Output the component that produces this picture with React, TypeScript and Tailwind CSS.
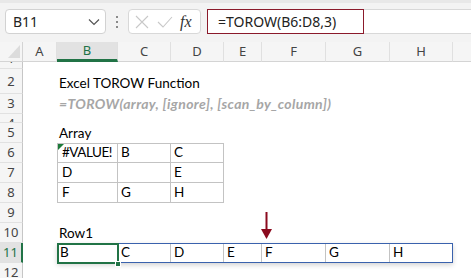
import React from "react";

const COLS: { n: string; w: number }[] = [
  { n: "A", w: 34 },
  { n: "B", w: 61 },
  { n: "C", w: 53 },
  { n: "D", w: 53 },
  { n: "E", w: 38 },
  { n: "F", w: 64 },
  { n: "G", w: 64 },
  { n: "H", w: 63 },
  { n: "", w: 40 },
];

const ROWS: { n: number; h: number }[] = [
  { n: 1, h: 7 },
  { n: 2, h: 25 },
  { n: 3, h: 20 },
  { n: 4, h: 9 },
  { n: 5, h: 20 },
  { n: 6, h: 20 },
  { n: 7, h: 20 },
  { n: 8, h: 20 },
  { n: 9, h: 20 },
  { n: 10, h: 20 },
  { n: 11, h: 20 },
  { n: 12, h: 20 },
];

const cellFont = { fontFamily: "Lato, 'Liberation Sans', sans-serif" };
const uiFont = { fontFamily: "'Noto Sans', 'Open Sans', sans-serif" };

function RowHeader({ n, h }: { n: number; h: number }) {
  const sel = n === 11;
  const align = n === 1 ? "items-end" : n === 4 ? "items-start" : "items-center";
  return (
    <div
      className={
        "relative w-[23px] shrink-0 overflow-hidden border-b border-r border-b-[#e1e1e1] flex justify-center text-[13px] " +
        align +
        " " +
        (sel
          ? "bg-[#e2e2e2] border-r-[#217346] border-r-2 text-[#217346]"
          : "bg-[#f5f5f5] border-r-[#c6c6c6] text-[#444]")
      }
      style={{ height: h, ...uiFont }}
    >
      <span className="block h-[19px] leading-[19px] shrink-0">{n}</span>
    </div>
  );
}

function Text({ children, className = "text-black text-[13.5px]" }: { children: React.ReactNode; className?: string }) {
  return (
    <span className={"whitespace-nowrap leading-[18px] " + className} style={cellFont}>
      {children}
    </span>
  );
}

function Cell({
  w,
  children,
  className = "",
}: {
  w: number;
  children?: React.ReactNode;
  className?: string;
}) {
  return (
    <div
      className={"relative shrink-0 h-full flex items-end pb-[1px] overflow-visible " + className}
      style={{ width: w }}
    >
      {children}
    </div>
  );
}

function Sheet() {
  const table: Record<number, string[]> = {
    6: ["#VALUE!", "B", "C"],
    7: ["D", "", "E"],
    8: ["F", "G", "H"],
  };
  const spill = ["B", "C", "D", "E", "F", "G", "H"];
  return (
    <div className="relative bg-white">
      {/* column headers */}
      <div className="flex h-[20px] bg-[#f5f5f5]">
        <div className="relative w-[23px] shrink-0 border-r border-b border-[#d4d4d4]">
          <svg className="absolute left-[8px] top-[3px]" width="12" height="13" viewBox="0 0 12 13">
            <polygon points="12,0 12,13 0,13" fill="#dcdcdc" />
          </svg>
        </div>
        {COLS.map((c, i) => {
          const sel = c.n === "B";
          return (
            <div
              key={i}
              className={
                "shrink-0 flex items-center justify-center text-[13px] border-r border-[#e0e0e0] " +
                (sel
                  ? "bg-[#e2e2e2] border-b-[3px] border-b-[#217346] text-[#217346]"
                  : "border-b border-b-[#d4d4d4] text-[#444]")
              }
              style={{ width: c.w, ...uiFont }}
            >
              {c.n}
            </div>
          );
        })}
      </div>
      {ROWS.map((r) => (
        <div key={r.n} className="flex" style={{ height: r.h }}>
          <RowHeader n={r.n} h={r.h} />
          <Cell w={COLS[0].w} />
          {r.n === 2 && (
            <Cell w={COLS[1].w} className="pl-[2px] pb-[2px]">
              <Text>Excel TOROW Function</Text>
            </Cell>
          )}
          {r.n === 3 && (
            <Cell w={COLS[1].w} className="pl-[2px]">
              <Text className="italic font-bold text-[14px] tracking-[0.35px] text-[#a6a6a6]">
                =TOROW(array, [ignore], [scan_by_column])
              </Text>
            </Cell>
          )}
          {r.n === 5 && (
            <Cell w={COLS[1].w} className="pl-[2px]">
              <Text>Array</Text>
            </Cell>
          )}
          {r.n === 10 && (
            <Cell w={COLS[1].w} className="pl-[2px]">
              <Text>Row1</Text>
            </Cell>
          )}
          {table[r.n] &&
            table[r.n].map((t, i) => (
              <Cell
                key={i}
                w={COLS[i + 1].w}
                className={
                  "border-b border-r border-[#c3c3c3] " +
                  (i === 0 ? "border-l pl-[4px] " : "pl-[3px] ") +
                  (r.n === 6 ? "border-t" : "")
                }
              >
                {r.n === 6 && i === 0 && (
                  <svg className="absolute left-0 top-0" width="6" height="6" viewBox="0 0 6 6">
                    <polygon points="0,0 6,0 0,6" fill="#1e7a3a" />
                  </svg>
                )}
                {t === "#VALUE!" ? (
                  <Text className="text-black text-[13.5px] tracking-[-0.5px]">{t}</Text>
                ) : (
                  <Text>{t}</Text>
                )}
              </Cell>
            ))}
          {r.n === 11 && (
            <div className="relative flex h-full border border-[#3a62ad] shadow-[0_2px_5px_rgba(0,0,0,0.18)]">
              {spill.map((t, i) => (
                <Cell
                  key={i}
                  w={COLS[i + 1].w - (i === 0 ? 1 : 0) - (i === spill.length - 1 ? 1 : 0)}
                  className={
                    (i === 0 ? "pl-[2px] " : "pl-[3px] ") +
                    "pb-0 " +
                    (i < spill.length - 1 ? "border-r border-[#c3c3c3]" : "")
                  }
                >
                  <Text>{t}</Text>
                </Cell>
              ))}
              <div className="absolute left-[-1px] top-[-1px] w-[62px] h-[21px] border-2 border-[#217346] pointer-events-none" />
              <div className="absolute left-[57px] top-[17px] w-[6px] h-[6px] bg-[#217346] border border-white" />
            </div>
          )}
        </div>
      ))}
      {/* red arrow */}
      <svg className="absolute left-[261px] top-[170px]" width="11" height="27" viewBox="0 0 11 27">
        <rect x="4.5" y="0" width="2" height="19" fill="#8b0a1e" />
        <polygon points="0,17 11,17 5.5,27" fill="#8b0a1e" />
      </svg>
    </div>
  );
}

function TopBar() {
  return (
    <div className="h-[42px] bg-[#f3f3f3] border-t-[3px] border-[#e8e8e8] flex items-start pt-[6px]" style={uiFont}>
      <div className="ml-[5px] w-[101px] h-[25px] rounded-[4px] border border-[#d2d2d2] bg-white flex items-center justify-between pl-[7px] pr-[5px]">
        <span className="text-[14px] text-[#222]">B11</span>
        <svg width="12" height="8" viewBox="0 0 12 8">
          <polyline points="1,1.5 6,6.5 11,1.5" fill="none" stroke="#555" strokeWidth="1.2" />
        </svg>
      </div>
      <div className="ml-[9px] w-[3px] h-[25px] flex flex-col items-center justify-center gap-[3px]">
        <div className="w-[2px] h-[2px] bg-[#8a8a8a]" />
        <div className="w-[2px] h-[2px] bg-[#8a8a8a]" />
        <div className="w-[2px] h-[2px] bg-[#8a8a8a]" />
      </div>
      <div className="ml-[10px] w-[73px] h-[25px] rounded-[4px] border border-[#d8d8d8] bg-white flex items-center pl-[6px]">
        <svg width="14" height="14" viewBox="0 0 14 14">
          <path d="M1 1 L13 13 M13 1 L1 13" stroke="#c8c8c8" strokeWidth="1.1" fill="none" />
        </svg>
        <svg className="ml-[8px]" width="16" height="12" viewBox="0 0 16 12">
          <polyline points="1,6 6,11 15,1" stroke="#c8c8c8" strokeWidth="1.1" fill="none" />
        </svg>
        <span
          className="ml-[7px] italic text-[16px] text-[#333] leading-none"
          style={{ fontFamily: "'Liberation Serif', 'DejaVu Serif', serif" }}
        >
          fx
        </span>
      </div>
      <div className="ml-[6px] flex-1 h-[25px] bg-white border-y border-[#d8d8d8] flex">
        <div className="w-[157px] h-[25px] -mt-[1px] border border-[#8b1a2b] flex items-center pl-[10px]">
          <span className="text-[14px] text-[#222] whitespace-nowrap">=TOROW(B6:D8,3)</span>
        </div>
      </div>
    </div>
  );
}

export default function App() {
  return (
    <div className="w-[471px] h-[278px] overflow-hidden bg-white">
      <TopBar />
      <Sheet />
    </div>
  );
}
